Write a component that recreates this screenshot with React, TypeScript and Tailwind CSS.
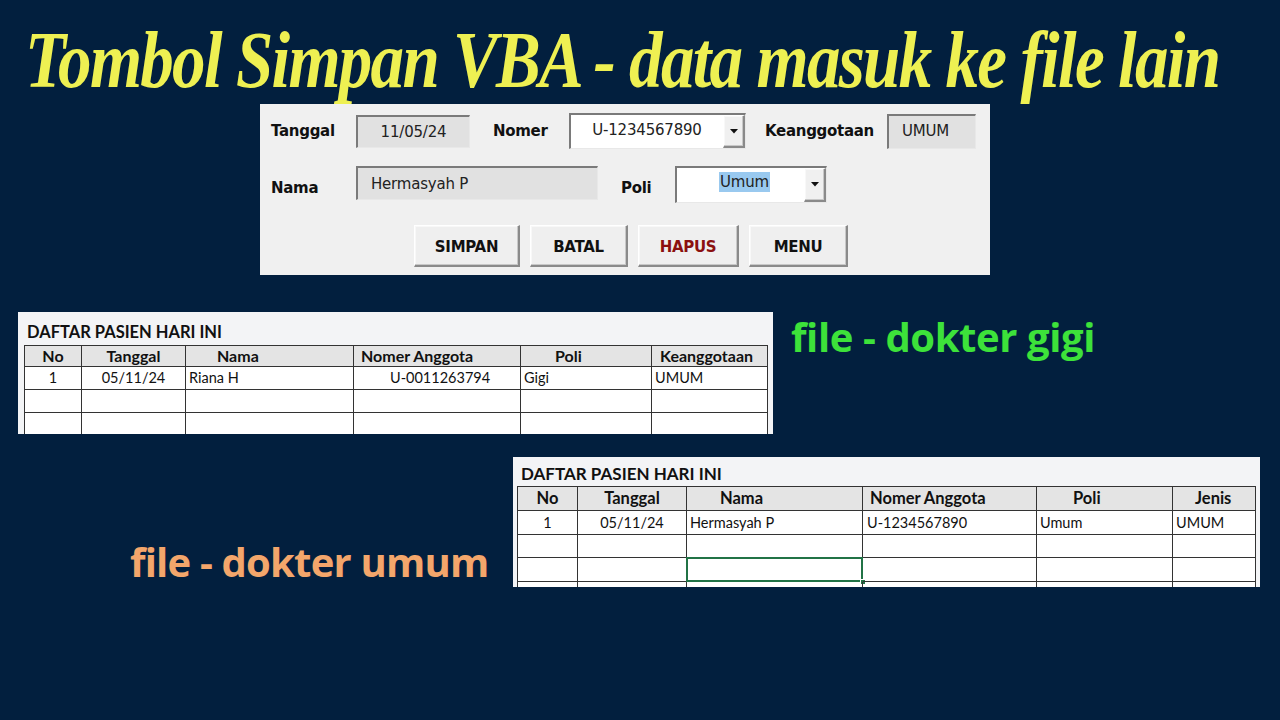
import React from "react";

const sunken =
  "border-t-2 border-l-2 border-b border-r border-t-[#7a7a7a] border-l-[#7a7a7a] border-b-[#e8e8e8] border-r-[#e8e8e8]";
const raised =
  "border-t border-l border-b-2 border-r-2 border-t-[#ffffff] border-l-[#ffffff] border-b-[#8a8a8a] border-r-[#8a8a8a] shadow-[inset_-1px_-1px_0_#c8c8c8,inset_1px_1px_0_#f8f8f8]";

function DropBtn() {
  return (
    <div className={`w-[22px] h-full bg-[#f0f0f0] flex items-center justify-center ${raised}`}>
      <svg width="8" height="5" viewBox="0 0 8 5">
        <path d="M0 0 L8 0 L4 4.5 Z" fill="#111" />
      </svg>
    </div>
  );
}

function FormPanel() {
  const lbl = "font-bold text-[15px] text-[#111] [font-family:'DejaVu_Sans',sans-serif] tracking-[-0.3px]";
  const val = "text-[15px] text-[#222] [font-family:'DejaVu_Sans',sans-serif] tracking-[-0.2px]";
  return (
    <div className="ml-[260px] w-[730px] h-[171px] bg-[#f0f0f0] flex flex-col">
      <div className="flex items-center pl-[11px] mt-[9px] h-[36px]">
        <div className={`${lbl} w-[85px]`}>Tanggal</div>
        <div className={`w-[114px] h-[33px] bg-[#e1e1e1] ${sunken} flex items-start justify-center pt-[4px] ${val}`}>11/05/24</div>
        <div className={`${lbl} ml-[23px] w-[76px]`}>Nomer</div>
        <div className={`w-[177px] h-[36px] bg-white ${sunken} flex`}>
          <div className={`flex-1 flex justify-center pt-[4px] ${val}`}>U-1234567890</div>
          <DropBtn />
        </div>
        <div className={`${lbl} ml-[19px] w-[122px]`}>Keanggotaan</div>
        <div className={`w-[89px] h-[35px] bg-[#e1e1e1] ${sunken} pl-[13px] pt-[4px] ${val}`}>UMUM</div>
      </div>
      <div className="flex items-start pl-[11px] mt-[17px] h-[37px]">
        <div className={`${lbl} w-[85px] mt-[11px]`}>Nama</div>
        <div className={`w-[242px] h-[34px] bg-[#e1e1e1] ${sunken} pl-[13px] pt-[5px] ${val}`}>Hermasyah P</div>
        <div className={`${lbl} ml-[23px] w-[54px] mt-[11px]`}>Poli</div>
        <div className={`w-[152px] h-[37px] bg-white ${sunken} flex`}>
          <div className={`flex-1 flex justify-center pt-[4px] pl-[8px] ${val}`}>
            <span className="bg-[#99c9ef] h-[20px] leading-[20px] px-[1px]">Umum</span>
          </div>
          <DropBtn />
        </div>
      </div>
      <div className="flex pl-[154px] mt-[22px] gap-[10px]">
        {[
          { t: "SIMPAN", w: "w-[106px]", c: "text-[#111]" },
          { t: "BATAL", w: "w-[98px]", c: "text-[#111]" },
          { t: "HAPUS", w: "w-[101px]", c: "text-[#8b1010]" },
          { t: "MENU", w: "w-[99px]", c: "text-[#111]" },
        ].map((b) => (
          <div
            key={b.t}
            className={`${b.w} h-[42px] bg-[#efefef] ${raised} flex items-center justify-center pt-[3px] font-bold text-[15px] tracking-[-0.3px] [font-family:'DejaVu_Sans',sans-serif] ${b.c}`}
          >
            {b.t}
          </div>
        ))}
      </div>
    </div>
  );
}

export default function App() {
  const font = "[font-family:Lato,'Liberation_Sans',sans-serif]";
  const t1cols = [57, 104, 168, 167, 131, 116];
  const t1head = [
    { t: "No", c: "justify-center" },
    { t: "Tanggal", c: "justify-center" },
    { t: "Nama", c: "pl-[31px]" },
    { t: "Nomer Anggota", c: "pl-[7px]" },
    { t: "Poli", c: "pl-[34px]" },
    { t: "Keanggotaan", c: "pl-[8px]" },
  ];
  const t1row = [
    { t: "1", c: "justify-center" },
    { t: "05/11/24", c: "justify-center" },
    { t: "Riana H", c: "pl-[3px]" },
    { t: "U-0011263794", c: "pl-[36px]" },
    { t: "Gigi", c: "pl-[3px]" },
    { t: "UMUM", c: "pl-[3px]" },
  ];
  const t2cols = [60, 109, 176, 174, 136, 83];
  const t2head = [
    { t: "No", c: "justify-center" },
    { t: "Tanggal", c: "justify-center" },
    { t: "Nama", c: "pl-[33px]" },
    { t: "Nomer Anggota", c: "pl-[7px]" },
    { t: "Poli", c: "pl-[36px]" },
    { t: "Jenis", c: "pl-[22px]" },
  ];
  const t2row = [
    { t: "1", c: "justify-center" },
    { t: "05/11/24", c: "justify-center" },
    { t: "Hermasyah P", c: "pl-[3px]" },
    { t: "U-1234567890", c: "pl-[4px]" },
    { t: "Umum", c: "pl-[3px]" },
    { t: "UMUM", c: "pl-[3px]" },
  ];

  const table = (
    cols: number[],
    hd: { t: string; c: string }[],
    rw: { t: string; c: string }[],
    headH: number,
    heights: number[],
    headCls: string,
    dataCls: string,
    sel?: number
  ) => (
    <div className="border-l border-[#333] w-fit">
      <div className="flex border-t border-[#333] bg-[#e4e4e4]" style={{ height: headH }}>
        {cols.map((w, i) => (
          <div
            key={i}
            className={`border-r border-b border-[#333] flex items-center font-bold text-[#111] ${font} ${headCls} ${hd[i].c}`}
            style={{ width: w }}
          >
            {hd[i].t}
          </div>
        ))}
      </div>
      {heights.map((h, ri) => (
        <div key={ri} className="flex bg-white" style={{ height: h }}>
          {cols.map((w, i) => (
            <div
              key={i}
              className={`relative border-r border-b border-[#333] flex items-center text-[#111] ${font} ${dataCls} ${rw[i].c}`}
              style={{ width: w }}
            >
              {ri === 0 ? rw[i].t : null}
              {sel !== undefined && ri === 2 && i === sel ? (
                <>
                  <div className="absolute -left-[1px] -top-[1px] -right-[1px] -bottom-[1px] border-2 border-[#217346]" />
                  <div className="absolute -right-[4px] -bottom-[4px] w-[6px] h-[6px] bg-[#217346] border border-white" />
                </>
              ) : null}
            </div>
          ))}
        </div>
      ))}
    </div>
  );

  return (
    <div className="w-[1280px] h-[720px] bg-[#021f3e] overflow-hidden flex flex-col">
      <div className="h-[104px] pl-[25px] pt-[20px]">
        <div className="origin-left scale-x-[0.837] whitespace-nowrap text-[#eef052] font-bold italic text-[80px] leading-[80px] tracking-[-2px] [font-family:'Liberation_Serif',serif]">
          Tombol Simpan VBA - data masuk ke file lain
        </div>
      </div>
      <FormPanel />
      <div className="flex mt-[37px] h-[122px]">
        <div className="ml-[18px] w-[755px] h-[122px] bg-[#f3f4f6] pl-[6px] overflow-hidden">
          <div className={`font-bold text-[16.5px] text-[#111] ${font} pl-[3px] pt-[11px] h-[33px] leading-[19px]`}>
            DAFTAR PASIEN HARI INI
          </div>
          {table(t1cols, t1head, t1row, 22, [23, 23, 23], "text-[16px]", "text-[14.5px]")}
        </div>
        <div className="ml-[18px] text-[40px] leading-[50px] font-bold text-[#3de23a] [font-family:'Open_Sans',sans-serif] tracking-[-0.4px]">
          file - dokter gigi
        </div>
      </div>
      <div className="flex mt-[23px] h-[130px]">
        <div className="ml-[130px] w-[383px] pt-[80px] text-[40px] leading-[50px] font-bold text-[#f3a66b] [font-family:'Open_Sans',sans-serif] tracking-[-0.8px]">
          file - dokter umum
        </div>
        <div className="w-[747px] h-[130px] bg-[#f3f4f6] pl-[4px] overflow-hidden">
          <div className={`font-bold text-[17px] text-[#111] ${font} pl-[4px] pt-[7px] h-[29px] leading-[20px]`}>
            DAFTAR PASIEN HARI INI
          </div>
          {table(t2cols, t2head, t2row, 25, [24, 23, 24, 24], "text-[16.5px]", "text-[14.5px]", 2)}
        </div>
      </div>
    </div>
  );
}
